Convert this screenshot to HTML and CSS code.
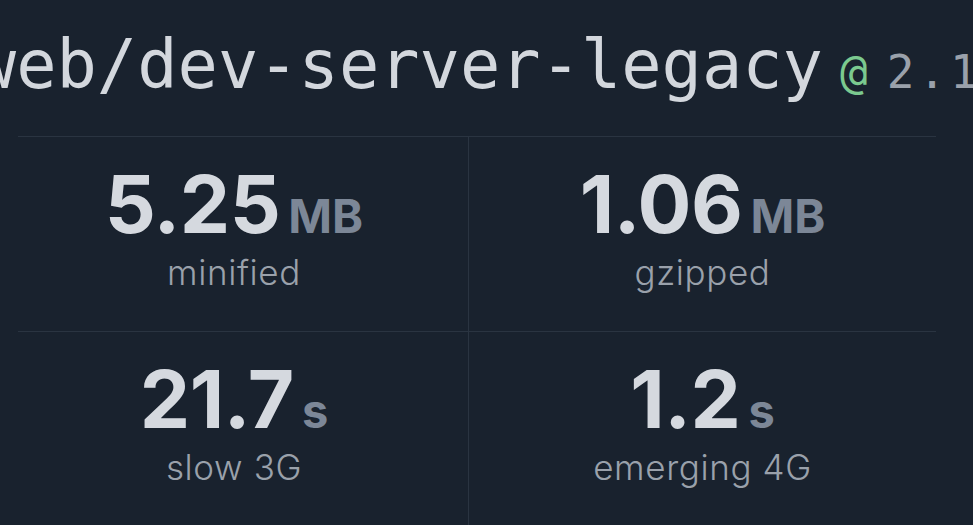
FILE: index.html
```html
<!DOCTYPE html>
<html lang="en">
<head>
  <meta charset="UTF-8">
  <title>@web/dev-server-legacy</title>
  <link rel="stylesheet" href="styles.css">
</head>
<body>
  <div class="page">
    <h1 class="title">
      <span class="name">web/dev-server-legacy</span>
      <span class="at">@</span>
      <span class="version">2.1.0</span>
    </h1>

    <div class="stats">
      <div class="stat">
        <div class="value">5.25<span class="unit">MB</span></div>
        <div class="label">minified</div>
      </div>
      <div class="stat">
        <div class="value">1.06<span class="unit">MB</span></div>
        <div class="label">gzipped</div>
      </div>
      <div class="stat">
        <div class="value">21.7<span class="unit">s</span></div>
        <div class="label">slow 3G</div>
      </div>
      <div class="stat">
        <div class="value">1.2<span class="unit">s</span></div>
        <div class="label">emerging 4G</div>
      </div>
    </div>
  </div>
</body>
</html>
```

FILE: styles.css
```css
* {
  box-sizing: border-box;
}

html, body {
  margin: 0;
  height: 100%;
}

body {
  background: #19222e;
  color: #d5d9df;
  font-family: Inter, 'Noto Sans', sans-serif;
  overflow: hidden;
}

.page {
  width: 973px;
  overflow: hidden;
}

.title {
  display: flex;
  justify-content: center;
  align-items: baseline;
  margin: 0;
  padding-top: 32px;
  padding-left: 48px;
  margin-bottom: 37px;
  font-family: 'DejaVu Sans Mono', monospace;
  font-weight: normal;
  white-space: nowrap;
  line-height: 1;
}

.name {
  font-size: 67px;
  color: #d3d7dd;
}

.at {
  font-size: 46px;
  color: #7bc98f;
  margin-left: 17px;
}

.version {
  font-size: 46px;
  color: #9aa1ab;
  letter-spacing: 4px;
  margin-left: 19px;
}

.stats {
  display: grid;
  grid-template-columns: 450px 468px;
  margin-left: 18px;
  width: 918px;
}

.stat {
  height: 195px;
  padding-top: 27px;
  border-top: 1px solid #2a3441;
  text-align: center;
}

.stat:nth-child(odd) {
  padding-right: 18px;
}

.stat:nth-child(even) {
  border-left: 1px solid #2a3441;
}

.value {
  font-size: 80px;
  font-weight: 700;
  line-height: 80px;
  color: #d5d9df;
  letter-spacing: -0.5px;
}

.unit {
  font-size: 47px;
  color: #7c8797;
  margin-left: 8px;
  letter-spacing: 0;
}

.label {
  margin-top: -5px;
  font-size: 35px;
  line-height: 42px;
  font-weight: 300;
  letter-spacing: 0.6px;
  color: #9aa1ab;
}
```
